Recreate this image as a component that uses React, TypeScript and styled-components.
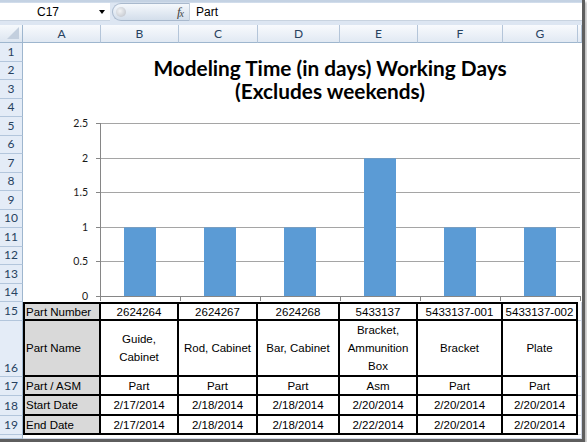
import * as React from 'react';
import styled, { createGlobalStyle } from 'styled-components';

const GlobalStyle = createGlobalStyle`
  html, body {
    margin: 0;
    padding: 0;
    background: #fff;
  }
  body {
    font-family: "Liberation Sans", Arial, sans-serif;
  }
`;

const Window = styled.div`
  width: 582px;
  height: 439px;
  border-right: 3px solid #5e5e5e;
  border-bottom: 3px solid #5e5e5e;
  box-shadow: 2px 2px 2px rgba(0, 0, 0, 0.25);
  background: #fff;
  overflow: hidden;
  display: flex;
  flex-direction: column;
`;

const FormulaArea = styled.div`
  height: 25px;
  box-sizing: border-box;
  padding: 3px 0 4px;
  background: linear-gradient(#c4d2e3 0, #c4d2e3 2px, #dde6f2 3px, #dde6f2 100%);
  display: flex;
`;

const NameBox = styled.div`
  width: 110px;
  box-sizing: border-box;
  background: #fff;
  border-bottom: 1px solid #c8d3e0;
  display: flex;
  align-items: center;
  justify-content: space-between;
  padding: 0 5px 0 37px;
  font-size: 12px;
  color: #000;
`;

const DropArrow = styled.span`
  width: 0;
  height: 0;
  border-left: 3px solid transparent;
  border-right: 3px solid transparent;
  border-top: 4px solid #000;
`;

const FxPill = styled.div`
  width: 78px;
  margin-left: 2px;
  box-sizing: border-box;
  border: 1px solid #a9b9cd;
  border-right: 1px solid #c3cedb;
  border-radius: 9px 0 0 9px;
  background: linear-gradient(#f5f8fc, #d3deeb);
  display: flex;
  align-items: center;
  justify-content: space-between;
  padding: 0 6px 0 3px;
`;

const PillDot = styled.span`
  width: 10px;
  height: 10px;
  border-radius: 50%;
  background: radial-gradient(circle at 40% 40%, #f2f3f5, #b9bec6);
`;

const FxLabel = styled.span`
  font-family: "Liberation Serif", "Times New Roman", serif;
  font-style: italic;
  font-size: 13px;
  color: #444;
  letter-spacing: -1px;

  small {
    font-size: 10px;
    vertical-align: -1px;
  }
`;

const FormulaInput = styled.div`
  flex: 1;
  background: #fff;
  border-bottom: 1px solid #c8d3e0;
  display: flex;
  align-items: center;
  padding-left: 6px;
  font-size: 12px;
  color: #000;
`;

const Sheet = styled.div`
  flex: 1;
  display: grid;
  grid-template-columns: 23px 78px 78px 79px 82px 78px 85px 75px 1fr;
  grid-template-rows: 18px repeat(14, 18.5px) 19px 56px 19px 20px 19px 1fr;
  background: #fff;
  font-family: Lato, "Liberation Sans", sans-serif;
`;

const Corner = styled.div`
  box-sizing: border-box;
  border-right: 1px solid #9eb6ce;
  border-bottom: 1px solid #9eb6ce;
  background: linear-gradient(#f6f9fc, #dce5f0);
  position: relative;

  &::after {
    content: '';
    position: absolute;
    right: 3px;
    bottom: 3px;
    border-left: 12px solid transparent;
    border-bottom: 12px solid #c3cfde;
  }
`;

const ColHeader = styled.div`
  box-sizing: border-box;
  border-right: 1px solid #b4c5d9;
  border-bottom: 1px solid #9eb6ce;
  background: linear-gradient(#f8fafd, #e1e9f3);
  display: flex;
  align-items: center;
  justify-content: center;
  font-size: 12px;
  color: #27425f;
`;

const RowHeader = styled.div<{ $bottom?: boolean }>`
  grid-column: 1;
  box-sizing: border-box;
  border-right: 1px solid #9eb6ce;
  border-bottom: 1px solid #b3c6dc;
  background: #e4ecf7;
  display: flex;
  align-items: ${({ $bottom }) => ($bottom ? 'flex-end' : 'center')};
  justify-content: center;
  font-size: 12px;
  line-height: 16px;
  color: #27425f;
`;

const ChartBox = styled.div`
  grid-column: 2 / -1;
  grid-row: 2 / 16;
  background: #fff;
  overflow: hidden;
  display: flex;
  flex-direction: column;
`;

const ChartTitle = styled.div`
  padding: 13px 0 0 55px;
  height: 59px;
  box-sizing: border-box;
  text-align: center;
  white-space: nowrap;
  font-family: Lato, "Liberation Sans", sans-serif;
  font-weight: 700;
  font-size: 20.8px;
  line-height: 23px;
  color: #000;
`;

const Plot = styled.svg`
  display: block;
  flex: none;

  text {
    font-family: Lato, "Liberation Sans", sans-serif;
    font-size: 10.5px;
    fill: #1a1a1a;
  }
`;

const Cell = styled.div<{ $label?: boolean; $top?: boolean; $wrap?: boolean }>`
  box-sizing: border-box;
  border-right: 2px solid #000;
  border-bottom: 2px solid #000;
  border-top: ${({ $top }) => ($top ? '2px solid #000' : 'none')};
  border-left: ${({ $label }) => ($label ? '2px solid #000' : 'none')};
  background: ${({ $label }) => ($label ? '#d9d9d9' : '#fff')};
  display: flex;
  align-items: center;
  justify-content: ${({ $label }) => ($label ? 'flex-start' : 'center')};
  text-align: ${({ $label }) => ($label ? 'left' : 'center')};
  white-space: ${({ $wrap }) => ($wrap ? 'normal' : 'nowrap')};
  padding: 0 ${({ $wrap }) => ($wrap ? '3px' : '0')} 0 ${({ $label }) => ($label ? '1px' : '0')};
  padding-left: ${({ $label, $wrap }) => ($label ? '1px' : $wrap ? '3px' : '0')};
  font-family: "Liberation Sans", Arial, sans-serif;
  font-size: 11.5px;
  line-height: 18px;
  color: #000;
`;

const BlankCell = styled.div<{ $span?: boolean }>`
  grid-column: ${({ $span }) => ($span ? '2 / -1' : 'auto')};
  box-sizing: border-box;
  border-right: 1px solid #d0d7e5;
  border-bottom: 1px solid #d0d7e5;
  background: #fff;
`;

interface IPart {
  num: string;
  name: string;
  kind: string;
  start: string;
  end: string;
  days: number;
}

const parts: IPart[] = [
  { num: '2624264', name: 'Guide, Cabinet', kind: 'Part', start: '2/17/2014', end: '2/17/2014', days: 1 },
  { num: '2624267', name: 'Rod, Cabinet', kind: 'Part', start: '2/18/2014', end: '2/18/2014', days: 1 },
  { num: '2624268', name: 'Bar, Cabinet', kind: 'Part', start: '2/18/2014', end: '2/18/2014', days: 1 },
  { num: '5433137', name: 'Bracket, Ammunition Box', kind: 'Asm', start: '2/20/2014', end: '2/22/2014', days: 2 },
  { num: '5433137-001', name: 'Bracket', kind: 'Part', start: '2/20/2014', end: '2/20/2014', days: 1 },
  { num: '5433137-002', name: 'Plate', kind: 'Part', start: '2/20/2014', end: '2/20/2014', days: 1 },
];

const tableRows: Array<{ row: number; label: string; field: keyof IPart }> = [
  { row: 15, label: 'Part Number', field: 'num' },
  { row: 16, label: 'Part Name', field: 'name' },
  { row: 17, label: 'Part / ASM', field: 'kind' },
  { row: 18, label: 'Start Date', field: 'start' },
  { row: 19, label: 'End Date', field: 'end' },
];

const letters = ['A', 'B', 'C', 'D', 'E', 'F', 'G', ''];

// chart geometry, in plot svg coordinates
const AXIS_X = 77;
const ZERO_Y = 194;
const UNIT = 69.1;
const CAT_W = 80;
const BAR_W = 32;
const PLOT_RIGHT = 557;
const ticks = [0, 0.5, 1, 1.5, 2, 2.5];

const Chart: React.FC = () => (
  <ChartBox>
    <ChartTitle>
      Modeling Time (in days) Working Days
      <br />
      (Excludes weekends)
    </ChartTitle>
    <Plot width={559} height={200} viewBox="0 0 559 200">
      {ticks.map(t => {
        const y = Math.round(ZERO_Y - t * UNIT) + 0.5;
        return (
          <g key={t}>
            {t > 0 && <line x1={AXIS_X} x2={PLOT_RIGHT} y1={y} y2={y} stroke="#a5a5a5" />}
            <line x1={AXIS_X - 4} x2={AXIS_X} y1={y} y2={y} stroke="#868686" />
            <text x={65} y={y + 3.5} textAnchor="end">{t}</text>
          </g>
        );
      })}
      {parts.map((p, i) => {
        const h = p.days * UNIT;
        return (
          <rect
            key={p.num}
            x={AXIS_X + i * CAT_W + (CAT_W - BAR_W) / 2}
            y={ZERO_Y - h + 0.5}
            width={BAR_W}
            height={h}
            fill="#5b9bd5"
          />
        );
      })}
      <line x1={AXIS_X + 0.5} x2={AXIS_X + 0.5} y1={21} y2={ZERO_Y + 1} stroke="#868686" />
      <line x1={AXIS_X} x2={PLOT_RIGHT} y1={ZERO_Y + 0.5} y2={ZERO_Y + 0.5} stroke="#868686" />
      {parts.concat(parts[0]).map((_, k) => (
        <line
          key={k}
          x1={AXIS_X + k * CAT_W + 0.5}
          x2={AXIS_X + k * CAT_W + 0.5}
          y1={ZERO_Y}
          y2={ZERO_Y + 5}
          stroke="#868686"
        />
      ))}
    </Plot>
  </ChartBox>
);

const App: React.FC = () => (
  <>
    <GlobalStyle />
    <Window>
      <FormulaArea>
        <NameBox>
          C17
          <DropArrow />
        </NameBox>
        <FxPill>
          <PillDot />
          <FxLabel>
            f<small>x</small>
          </FxLabel>
        </FxPill>
        <FormulaInput>Part</FormulaInput>
      </FormulaArea>
      <Sheet>
        <Corner />
        {letters.map((l, i) => (
          <ColHeader key={i}>{l}</ColHeader>
        ))}
        {Array.from({ length: 14 }, (_, i) => (
          <RowHeader key={i} style={{ gridRow: i + 2 }}>
            {i + 1}
          </RowHeader>
        ))}
        <Chart />
        {tableRows.map(r => (
          <React.Fragment key={r.row}>
            <RowHeader $bottom={r.row === 16}>{r.row}</RowHeader>
            <Cell $label $top={r.row === 15}>
              {r.label}
            </Cell>
            {parts.map(p => (
              <Cell key={p.num} $top={r.row === 15} $wrap={r.row === 16}>
                {p[r.field]}
              </Cell>
            ))}
            <BlankCell />
          </React.Fragment>
        ))}
        <RowHeader />
        <BlankCell $span />
      </Sheet>
    </Window>
  </>
);

export default App;
